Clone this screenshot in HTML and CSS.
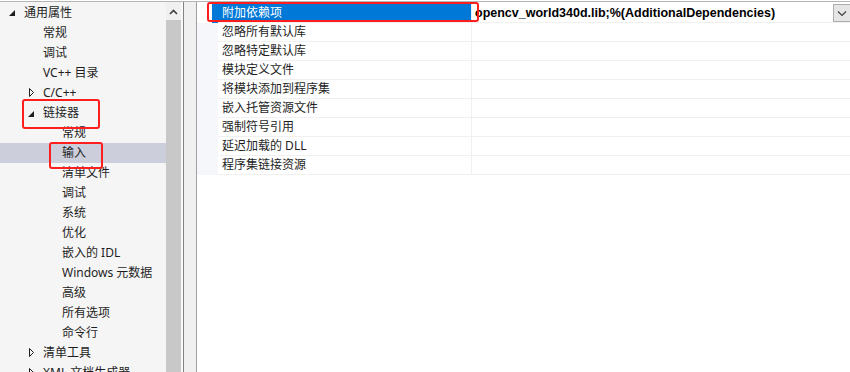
FILE: index.html
```html
<!doctype html>
<html lang="zh-CN">
<head>
  <meta charset="utf-8" />
  <meta name="viewport" content="width=device-width,initial-scale=1" />
  <title>属性页</title>
  <link rel="stylesheet" href="styles.css">
</head>
<body>

  <div class="app">

    <!-- 左侧树 -->
    <div class="tree-pane">
      <div class="tree">
        <div class="node lv0"><span class="arrow"><svg width="16" height="20"><polygon points="9,7 9,13 3,13" fill="#1e1e1e"/></svg></span>通用属性</div>
        <div class="node lv1"><span class="arrow"></span>常规</div>
        <div class="node lv1"><span class="arrow"></span>调试</div>
        <div class="node lv1"><span class="arrow"></span>VC++ 目录</div>
        <div class="node lv1"><span class="arrow"><svg width="16" height="20"><polygon points="4.5,5.5 8.5,9.5 4.5,13.5" fill="none" stroke="#1e1e1e"/></svg></span>C/C++</div>
        <div class="node lv1"><span class="arrow"><svg width="16" height="20"><polygon points="9,8 9,14 3,14" fill="#1e1e1e"/></svg></span>链接器</div>
        <div class="node lv2"><span class="arrow"></span>常规</div>
        <div class="node lv2 selected"><span class="arrow"></span>输入</div>
        <div class="node lv2"><span class="arrow"></span>清单文件</div>
        <div class="node lv2"><span class="arrow"></span>调试</div>
        <div class="node lv2"><span class="arrow"></span>系统</div>
        <div class="node lv2"><span class="arrow"></span>优化</div>
        <div class="node lv2"><span class="arrow"></span>嵌入的 IDL</div>
        <div class="node lv2"><span class="arrow"></span>Windows 元数据</div>
        <div class="node lv2"><span class="arrow"></span>高级</div>
        <div class="node lv2"><span class="arrow"></span>所有选项</div>
        <div class="node lv2"><span class="arrow"></span>命令行</div>
        <div class="node lv1"><span class="arrow"><svg width="16" height="20"><polygon points="4.5,5.5 8.5,9.5 4.5,13.5" fill="none" stroke="#1e1e1e"/></svg></span>清单工具</div>
        <div class="node lv1"><span class="arrow"><svg width="16" height="20"><polygon points="4.5,5.5 8.5,9.5 4.5,13.5" fill="none" stroke="#1e1e1e"/></svg></span>XML 文档生成器</div>

        <div class="mark mark-linker"></div>
        <div class="mark mark-input"></div>
      </div>

      <div class="scrollbar">
        <div class="sb-up"><svg width="15" height="18"><polyline points="4,12 7.5,8.5 11,12" fill="none" stroke="#404040" stroke-width="1.6"/></svg></div>
        <div class="sb-thumb"></div>
      </div>
    </div>

    <div class="splitter"></div>

    <!-- 右侧属性表 -->
    <div class="grid-pane">
      <div class="row selected">
        <div class="margin"></div>
        <div class="label">附加依赖项</div>
        <div class="value">
          <span class="bold">opencv_world340d.lib;%(AdditionalDependencies)</span>
          <span class="drop"><svg width="16" height="16"><polyline points="4,6.5 8,10.5 12,6.5" fill="none" stroke="#404040" stroke-width="1.2"/></svg></span>
        </div>
      </div>
      <div class="row"><div class="margin"></div><div class="label">忽略所有默认库</div><div class="value"></div></div>
      <div class="row"><div class="margin"></div><div class="label">忽略特定默认库</div><div class="value"></div></div>
      <div class="row"><div class="margin"></div><div class="label">模块定义文件</div><div class="value"></div></div>
      <div class="row"><div class="margin"></div><div class="label">将模块添加到程序集</div><div class="value"></div></div>
      <div class="row"><div class="margin"></div><div class="label">嵌入托管资源文件</div><div class="value"></div></div>
      <div class="row"><div class="margin"></div><div class="label">强制符号引用</div><div class="value"></div></div>
      <div class="row"><div class="margin"></div><div class="label">延迟加载的 DLL</div><div class="value"></div></div>
      <div class="row"><div class="margin"></div><div class="label">程序集链接资源</div><div class="value"></div></div>

      <div class="mark mark-deps"></div>
    </div>

  </div>

</body>
</html>
```

FILE: styles.css
```css
:root{
  --text:#1e1e1e;
  --line:#a0a0a0;
  --tree-bg:#f5f5f5;
  --accent:#0078d7;
  --red:#ff1e1e;
  font-family: "Noto Sans", "Noto Sans CJK SC", sans-serif;
}
body{
  margin:0;
  width:850px;
  height:372px;
  overflow:hidden;
  background:#fff;
  color:var(--text);
  font-size:12px;
}

.app{
  display:flex;
  margin-top:1px;
  border-top:1px solid #b4b4b4;
  height:370px;
}

/* tree */
.tree-pane{
  display:flex;
  width:183px;
  border-right:1px solid #838383;
  background:#fafafa;
}
.tree{
  position:relative;
  width:166px;
  padding-top:1px;
  background:var(--tree-bg);
  overflow:hidden;
}
.node{
  display:flex;
  align-items:center;
  height:20px;
  line-height:20px;
  white-space:nowrap;
}
.node.lv0{ padding-left:6px; }
.node.lv1{ padding-left:25px; }
.node.lv2{ padding-left:44px; }
.node.selected{ background:#cccedb; }
.arrow{
  display:block;
  width:16px;
  height:20px;
  margin-right:2px;
  flex:none;
}
.arrow svg{ display:block; }

.scrollbar{
  width:15px;
  display:flex;
  flex-direction:column;
  background:#f0f0f0;
}
.sb-up{ height:18px; }
.sb-up svg{ display:block; }
.sb-thumb{ flex:1; background:#c8c8c8; }

.splitter{
  width:12px;
  background:#f0f0f0;
  border-right:1px solid var(--line);
}

/* property grid */
.grid-pane{
  position:relative;
  flex:1;
  padding-top:2px;
}
.row{
  display:flex;
  height:19px;
}
.margin{
  width:21px;
  flex:none;
  background:#f5f7fb;
}
.label{
  width:249px;
  flex:none;
  padding-left:4px;
  line-height:18px;
  border-right:1px solid #f0f0f0;
  border-bottom:1px solid #f0f0f0;
  white-space:nowrap;
}
.value{
  flex:1;
  display:flex;
  align-items:flex-start;
  padding-left:3px;
  border-bottom:1px solid #f0f0f0;
}
.row.selected .margin{
  background:linear-gradient(to right, #fff 15px, var(--accent) 15px);
}
.row.selected .label{
  background:var(--accent);
  color:#fff;
}
.bold{
  font-family:"Liberation Sans", Arial, sans-serif;
  font-weight:700;
  font-size:12.5px;
  line-height:18px;
  color:#000;
}
.drop{
  margin-left:auto;
  width:16px;
  height:16px;
  border:1px solid #adadad;
  border-right:0;
  background:#e5e5e5;
}
.drop svg{ display:block; }

/* red annotation boxes */
.mark{
  position:absolute;
  border:2px solid var(--red);
  border-radius:3px;
  box-sizing:border-box;
}
.mark-linker{ left:22px; top:97px; width:78px; height:30px; }
.mark-input{ left:49px; top:140px; width:54px; height:27px; }
.mark-deps{ left:10px; top:0; width:272px; height:20px; }
```
